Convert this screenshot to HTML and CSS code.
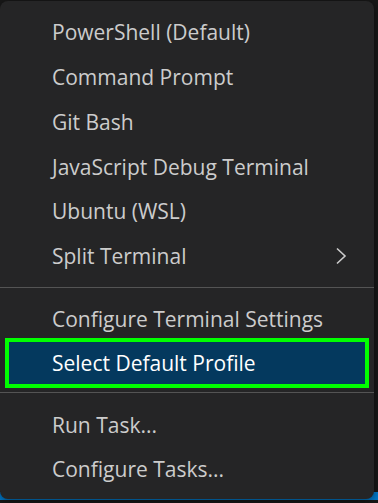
FILE: index.html
```html
<!DOCTYPE html>
<html lang="en">
<head>
    <meta charset="UTF-8">
    <title>Terminal menu</title>
    <link rel="stylesheet" href="styles.css">
</head>
<body>
    <div class="workbench">
        <div class="status-bar"></div>
    </div>

    <div class="menu">
        <div class="menu-item">PowerShell (Default)</div>
        <div class="menu-item">Command Prompt</div>
        <div class="menu-item">Git Bash</div>
        <div class="menu-item">JavaScript Debug Terminal</div>
        <div class="menu-item">Ubuntu (WSL)</div>
        <div class="menu-item has-submenu">
            <span>Split Terminal</span>
            <svg class="chevron" width="12" height="18" viewBox="0 0 12 18">
                <path d="M2 1.5 L10 9 L2 16.5" fill="none" stroke="#cccccc" stroke-width="1.6"/>
            </svg>
        </div>
        <div class="separator"></div>
        <div class="menu-item">Configure Terminal Settings</div>
        <div class="menu-item selected">Select Default Profile</div>
        <div class="separator"></div>
        <div class="menu-item">Run Task...</div>
        <div class="menu-item">Configure Tasks...</div>
    </div>
</body>
</html>
```

FILE: styles.css
```css
:root {
    --menu-bg: #252526;
    --menu-fg: #cccccc;
    --separator: #545454;
    --selected-bg: #04395e;
    --highlight: #00ff00;
    --status-blue: #007acc;
}

* {
    margin: 0;
    padding: 0;
    box-sizing: border-box;
}

body {
    width: 378px;
    height: 503px;
    overflow: hidden;
    background: #1e1e1e;
    font-family: 'Open Sans', 'Noto Sans', sans-serif;
    position: relative;
}

.workbench {
    height: 503px;
    display: flex;
    flex-direction: column;
    justify-content: flex-end;
    background: #181818;
}

.status-bar {
    height: 8px;
    margin-bottom: 3px;
    background: var(--status-blue);
}

/* the context menu lies over the workbench */
.menu {
    position: absolute;
    top: 1px;
    left: 0;
    width: 374px;
    height: 498px;
    background: var(--menu-bg);
    border-radius: 8px;
    padding-top: 9px;
    box-shadow: 0 2px 8px rgba(0,0,0,0.5);
}

.menu-item {
    height: 44.75px;
    padding-left: 52px;
    padding-right: 27px;
    display: flex;
    align-items: center;
    justify-content: space-between;
    color: var(--menu-fg);
    font-size: 21px;
    white-space: nowrap;
}

.menu-item.selected {
    height: 42.5px;
    margin: 0.5px 9px 1.75px;
    padding-left: 43px;
    background: var(--selected-bg);
    color: #ffffff;
    outline: 4px solid var(--highlight);
}

.chevron {
    display: block;
}

.separator {
    height: 1px;
    margin: 8px 0 9px;
    background: var(--separator);
}
```
